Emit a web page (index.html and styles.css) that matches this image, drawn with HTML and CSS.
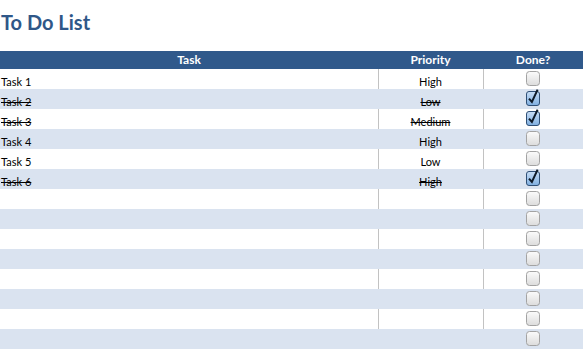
FILE: index.html
```html
<!DOCTYPE html>
<html>
<head>
<meta charset="utf-8">
<link rel="stylesheet" href="styles.css">
</head>
<body>
<svg class="defs" width="0" height="0" aria-hidden="true">
  <defs>
    <linearGradient id="gOff" x1="0" y1="0" x2="0" y2="1">
      <stop offset="0" stop-color="#fbfbfb"/>
      <stop offset="1" stop-color="#dcdcdc"/>
    </linearGradient>
    <linearGradient id="gOn" x1="0" y1="0" x2="0" y2="1">
      <stop offset="0" stop-color="#c9def5"/>
      <stop offset="1" stop-color="#7eaee0"/>
    </linearGradient>
  </defs>
</svg>

<h1 class="title">To Do List</h1>

<table class="todo">
  <colgroup>
    <col class="c-task">
    <col class="c-prio">
    <col class="c-done">
  </colgroup>
  <thead>
    <tr><th>Task</th><th>Priority</th><th>Done?</th></tr>
  </thead>
  <tbody>
    <tr><td>Task 1</td><td class="ctr">High</td><td class="box"><svg class="cb" viewBox="0 0 14 15"><rect x="0.5" y="0.5" width="13" height="14" rx="3" fill="url(#gOff)" stroke="#a3a3a3"/></svg></td></tr>
    <tr class="done"><td>Task 2</td><td class="ctr">Low</td><td class="box"><svg class="cb" viewBox="0 0 14 15"><rect x="0.5" y="0.5" width="13" height="14" rx="2.5" fill="url(#gOn)" stroke="#2f4f75"/><path d="M3 7.6 L5.9 11 L11.6 -1.4" fill="none" stroke="#0e1a28" stroke-width="2"/></svg></td></tr>
    <tr class="done"><td>Task 3</td><td class="ctr">Medium</td><td class="box"><svg class="cb" viewBox="0 0 14 15"><rect x="0.5" y="0.5" width="13" height="14" rx="2.5" fill="url(#gOn)" stroke="#2f4f75"/><path d="M3 7.6 L5.9 11 L11.6 -1.4" fill="none" stroke="#0e1a28" stroke-width="2"/></svg></td></tr>
    <tr><td>Task 4</td><td class="ctr">High</td><td class="box"><svg class="cb" viewBox="0 0 14 15"><rect x="0.5" y="0.5" width="13" height="14" rx="3" fill="url(#gOff)" stroke="#a3a3a3"/></svg></td></tr>
    <tr><td>Task 5</td><td class="ctr">Low</td><td class="box"><svg class="cb" viewBox="0 0 14 15"><rect x="0.5" y="0.5" width="13" height="14" rx="3" fill="url(#gOff)" stroke="#a3a3a3"/></svg></td></tr>
    <tr class="done"><td>Task 6</td><td class="ctr">High</td><td class="box"><svg class="cb" viewBox="0 0 14 15"><rect x="0.5" y="0.5" width="13" height="14" rx="2.5" fill="url(#gOn)" stroke="#2f4f75"/><path d="M3 7.6 L5.9 11 L11.6 -1.4" fill="none" stroke="#0e1a28" stroke-width="2"/></svg></td></tr>
    <tr><td></td><td class="ctr"></td><td class="box"><svg class="cb" viewBox="0 0 14 15"><rect x="0.5" y="0.5" width="13" height="14" rx="3" fill="url(#gOff)" stroke="#a3a3a3"/></svg></td></tr>
    <tr><td></td><td class="ctr"></td><td class="box"><svg class="cb" viewBox="0 0 14 15"><rect x="0.5" y="0.5" width="13" height="14" rx="3" fill="url(#gOff)" stroke="#a3a3a3"/></svg></td></tr>
    <tr><td></td><td class="ctr"></td><td class="box"><svg class="cb" viewBox="0 0 14 15"><rect x="0.5" y="0.5" width="13" height="14" rx="3" fill="url(#gOff)" stroke="#a3a3a3"/></svg></td></tr>
    <tr><td></td><td class="ctr"></td><td class="box"><svg class="cb" viewBox="0 0 14 15"><rect x="0.5" y="0.5" width="13" height="14" rx="3" fill="url(#gOff)" stroke="#a3a3a3"/></svg></td></tr>
    <tr><td></td><td class="ctr"></td><td class="box"><svg class="cb" viewBox="0 0 14 15"><rect x="0.5" y="0.5" width="13" height="14" rx="3" fill="url(#gOff)" stroke="#a3a3a3"/></svg></td></tr>
    <tr><td></td><td class="ctr"></td><td class="box"><svg class="cb" viewBox="0 0 14 15"><rect x="0.5" y="0.5" width="13" height="14" rx="3" fill="url(#gOff)" stroke="#a3a3a3"/></svg></td></tr>
    <tr><td></td><td class="ctr"></td><td class="box"><svg class="cb" viewBox="0 0 14 15"><rect x="0.5" y="0.5" width="13" height="14" rx="3" fill="url(#gOff)" stroke="#a3a3a3"/></svg></td></tr>
    <tr><td></td><td class="ctr"></td><td class="box"><svg class="cb" viewBox="0 0 14 15"><rect x="0.5" y="0.5" width="13" height="14" rx="3" fill="url(#gOff)" stroke="#a3a3a3"/></svg></td></tr>
  </tbody>
</table>
</body>
</html>
```

FILE: styles.css
```css
html, body {
  margin: 0;
  padding: 0;
  background: #ffffff;
}

body {
  font-family: Lato, "Liberation Sans", sans-serif;
  color: #000;
  overflow: hidden;
}

.defs {
  position: absolute;
  width: 0;
  height: 0;
}

.title {
  margin: 0 0 17px 0;
  padding: 10px 0 0 1px;
  font-size: 20px;
  line-height: 24px;
  font-weight: 700;
  color: #2f5788;
}

.todo {
  width: 583px;
  table-layout: fixed;
  border-collapse: collapse;
  border-spacing: 0;
}

.c-task { width: 378px; }
.c-prio { width: 105px; }
.c-done { width: 100px; }

.todo th {
  height: 18px;
  padding: 0;
  background: #30598b;
  color: #ffffff;
  font-size: 12px;
  font-weight: 700;
  line-height: 18px;
  text-align: center;
}

.todo td {
  height: 20px;
  padding: 0 0 0 1px;
  font-size: 11px;
  line-height: 15px;
  vertical-align: bottom;
  white-space: nowrap;
}

.todo tbody tr:nth-child(even) td {
  background: #dae3f0;
}

.todo tbody tr:nth-child(odd) td + td {
  border-left: 1px solid #c2c2c2;
}

.todo td.ctr {
  text-align: center;
  padding: 0;
}

.todo td.box {
  padding: 0;
  vertical-align: top;
}

.done td {
  text-decoration: line-through;
}

.cb {
  display: block;
  width: 14px;
  height: 15px;
  margin: 2px auto 0 auto;
  overflow: visible;
}
```
